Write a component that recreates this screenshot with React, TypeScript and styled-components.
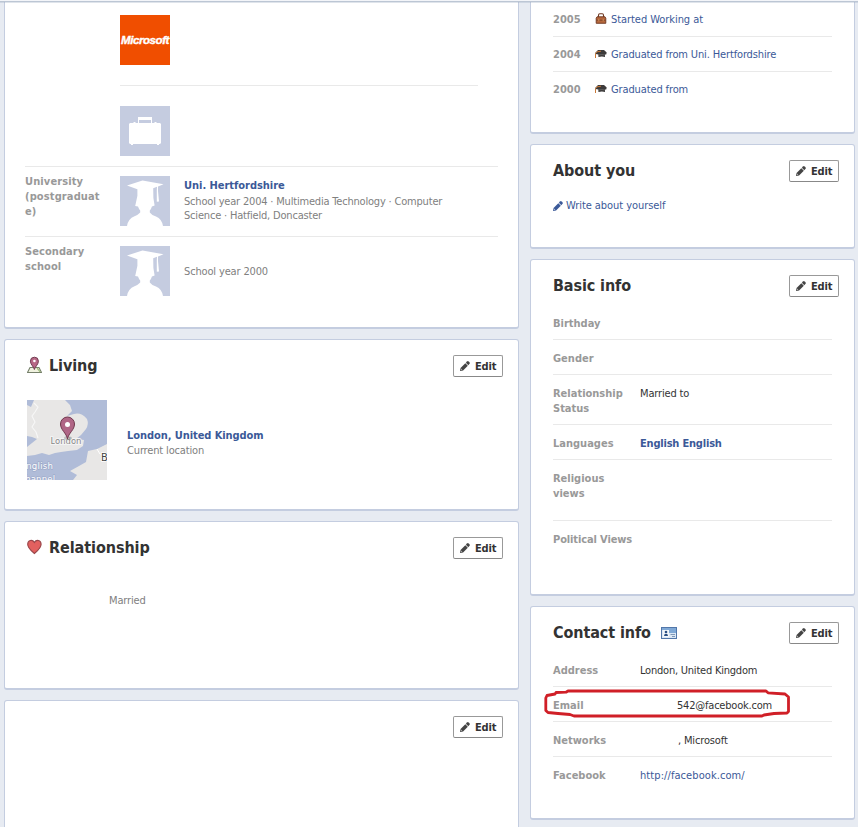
import React from 'react';
import styled, { createGlobalStyle, css } from 'styled-components';

const Global = createGlobalStyle`
  * { box-sizing: border-box; }
  html, body { margin: 0; height: 827px; overflow: hidden; }
  body {
    background: #e7ebf2;
    font: 11px/15px "DejaVu Sans Condensed", "DejaVu Sans", sans-serif;
    color: #333;
  }
`;

const Page = styled.div`
  width: 858px;
  height: 827px;
  overflow: hidden;
`;
const TopEdge = styled.div`
  height: 2px;
  background: #f3f5f9;
  border-bottom: 1px solid #bcc6d4;
  box-shadow: 0 1px 0 rgba(150, 165, 190, 0.3);
  position: relative;
`;
const Columns = styled.div`
  display: grid;
  grid-template-columns: 515px 325px;
  column-gap: 11px;
  padding-left: 4px;
  align-items: start;
`;
const Column = styled.div`
  display: flex;
  flex-direction: column;
  gap: 10px;
`;
const Card = styled.section<{ $h: number; $open?: boolean; $side?: boolean }>`
  height: ${p => p.$h}px;
  background: #fff;
  border: 1px solid #c4cde0;
  border-bottom-width: 2px;
  border-radius: 3px;
  padding: ${p => (p.$side ? '15px 15px 0 22px' : '15px 15px 0 20px')};
  ${p => p.$open && css`
    border-top: 0;
    border-radius: 0 0 3px 3px;
    padding-top: 0;
  `}
`;
const CardHead = styled.header`
  display: flex;
  align-items: center;
  height: 22px;
  gap: 5px;
`;
const Title = styled.h2<{ $ls?: number }>`
  margin: 0;
  font-size: 16px;
  line-height: 22px;
  font-weight: 700;
  color: #333;
  white-space: nowrap;
  letter-spacing: ${p => p.$ls ?? 0}px;
`;
const EditBox = styled.button`
  margin-left: auto;
  width: 50px;
  height: 22px;
  padding: 0 0 0 6px;
  display: flex;
  align-items: center;
  gap: 5px;
  border: 1px solid #999;
  border-bottom-color: #888;
  border-radius: 2px;
  background: #fff;
  font: 700 11px/15px "DejaVu Sans Condensed", sans-serif;
  letter-spacing: -0.15px;
  color: #333;
`;
const Strong = styled.div<{ $ls?: number }>`
  font-weight: 700;
  color: #3b5998;
  white-space: nowrap;
  letter-spacing: ${p => p.$ls ?? 0}px;
`;
const Muted = styled.div<{ $ls?: number; $lh?: number; $top?: number }>`
  margin-top: ${p => p.$top ?? 0}px;
  color: #808080;
  white-space: nowrap;
  line-height: ${p => p.$lh ?? 15}px;
  letter-spacing: ${p => p.$ls ?? -0.15}px;
`;
const Link = styled.span<{ $ls?: number }>`
  color: #3b5998;
  white-space: nowrap;
  letter-spacing: ${p => p.$ls ?? -0.12}px;
`;
const Label = styled.div<{ $ls?: number }>`
  font-weight: 700;
  color: #999;
  white-space: nowrap;
  letter-spacing: ${p => p.$ls ?? 0}px;
`;

const Employer = styled.div<{ $h: number; $top: number; $rule?: boolean }>`
  margin-left: 95px;
  width: 358px;
  height: ${p => p.$h}px;
  padding-top: ${p => p.$top}px;
  border-bottom: ${p => (p.$rule ? '1px solid #e9e9e9' : '0')};
`;
const School = styled.div`
  display: grid;
  grid-template-columns: 95px 50px 1fr;
  width: 473px;
  height: 70px;
  padding-top: 9px;
  border-top: 1px solid #e9e9e9;
`;
const SchoolLabel = styled(Label)`
  margin-top: -2px;
`;
const SchoolText = styled.div<{ $top: number }>`
  padding: ${p => p.$top}px 0 0 14px;
`;
const Tile = styled.svg`
  display: block;
  width: 50px;
  height: 50px;
  background: #c5cce0;
`;
const BrandTile = styled.div`
  width: 50px;
  height: 50px;
  display: flex;
  align-items: center;
  justify-content: center;
  background: #f04e00;
  color: #fff;
  font: italic 700 11.5px/50px "Liberation Sans", sans-serif;
  letter-spacing: -0.42px;
  -webkit-text-stroke: 0.4px #fff;
`;

const SectionIcon = styled.svg`
  display: block;
  margin: -3px 0 0 1px;
  width: 18px;
  height: 18px;
  flex: none;
`;
const PlaceRow = styled.div`
  display: flex;
  margin: 23px 0 0 2px;
  gap: 20px;
`;
const PlaceText = styled.div`
  padding-top: 28px;
`;
const MapTile = styled.svg`
  display: block;
  width: 80px;
  height: 80px;
`;
const RelationText = styled.div`
  margin: 34px 0 0 84px;
`;

const EventRow = styled.div<{ $last?: boolean }>`
  display: grid;
  grid-template-columns: 41px 17px 1fr;
  align-items: start;
  width: 279px;
  height: 35px;
  padding-top: 10px;
  border-bottom: ${p => (p.$last ? '0' : '1px solid #e9e9e9')};
`;
const SmallIcon = styled.svg`
  display: block;
  width: 13px;
  height: 12px;
  margin-top: 1px;
`;
const WriteLine = styled.div`
  display: flex;
  align-items: center;
  gap: 3px;
  margin-top: 16px;
`;
const InfoRows = styled.div`
  margin-top: 8px;
  width: 279px;
`;
const InfoRow = styled.div<{ $h: number; $last?: boolean }>`
  display: grid;
  grid-template-columns: 87px 1fr;
  height: ${p => p.$h}px;
  padding-top: 11px;
  border-bottom: ${p => (p.$last ? '0' : '1px solid #e9e9e9')};
`;
const Value = styled.div<{ $indent?: number; $ls?: number }>`
  padding-left: ${p => p.$indent ?? 0}px;
  color: #333;
  white-space: nowrap;
  letter-spacing: ${p => p.$ls ?? -0.15}px;
`;
const MarkedRow = styled(InfoRow)`
  position: relative;
`;
const Marker = styled.svg`
  position: absolute;
  left: -9px;
  top: 2px;
  width: 248px;
  height: 31px;
  pointer-events: none;
`;
const CardIcon = styled.svg`
  display: block;
  width: 16px;
  height: 12px;
  margin-left: 5px;
`;

const PencilSvg = styled.svg`
  display: block;
  width: 10px;
  height: 10px;
  flex: none;
`;
function Pencil({ color }: { color: string }) {
  return (
    <PencilSvg viewBox="0 0 10 10">
      <path d="M0 10L.6 6.9 5.3 2.2 7.8 4.7 3.1 9.4Z" fill={color} />
      <path d="M5.8 1.7L7.4.2Q8 -.1 8.6.4L9.6 1.4Q10.1 2 9.7 2.6L8.3 4.2Z" fill={color} />
      <path d="M1 7.6L2.4 9 1 9.1Z" fill="#fff" opacity=".65" />
    </PencilSvg>
  );
}
const Edit = () => <EditBox><Pencil color="#444" />Edit</EditBox>;

const Briefcase = () => (
  <Tile viewBox="0 0 50 50">
    <path d="M18 17V11H32V17H31V14H19V17Z" fill="#fff" />
    <path d="M10 17H13.5V16H15.5V17H34.5V16H36.5V17H40L41 18V37L40 38H39V39H37V38H13V39H11V38H10L9 37V18Z" fill="#fff" />
  </Tile>
);
const Graduate = () => (
  <Tile viewBox="0 0 50 50">
    <path d="M7 9.6L22.5 4.6 43.5 8.2 38 10.4V15L39 25.5 36.8 25.8V14L37 10.8 33.2 12.2 33.4 22 34.6 29.5 31.9 30.5Q31.4 32.6 29.8 34.4V36.6Q31.5 39.2 36 40.4 42 43 43 50H7Q8 43 14.5 40.3 18 39 20.2 36.6V34.4Q18.6 32.6 18 30.5L15.2 30 17.4 19.8V13.3Z" fill="#fff" />
  </Tile>
);
const Satchel = () => (
  <SmallIcon viewBox="0 0 13 12">
    <path d="M4.5 4V2.3Q4.5.8 5.8.8H8.2Q9.5.8 9.5 2.3V4" fill="none" stroke="#6d3720" strokeWidth="1.1" />
    <path d="M3 3.8H11L11.8 5.2V10.3H2.2V5.2Z" fill="#b5673c" stroke="#6d3720" strokeWidth=".9" />
    <path d="M2.5 7.2H11.5" stroke="#7c4126" strokeWidth=".9" />
    <path d="M4.8 6V8.2M9.2 6V8.2" stroke="#dba068" strokeWidth=".8" />
  </SmallIcon>
);
const Cap = () => (
  <SmallIcon viewBox="0 0 13 12">
    <path d="M1.3 4.8L4 2H10L12.7 4.4 12.2 6.4 11 6.6V9Q8 8 4.4 9V6.6L1.6 6Z" fill="#3d3b3b" />
    <path d="M4.6 7Q8 6 11 7" fill="none" stroke="#777" strokeWidth=".6" />
    <path d="M7 3.2L3 3.8 1.5 5.6V10" fill="none" stroke="#c97938" strokeWidth="1" />
  </SmallIcon>
);
const LivingIcon = () => (
  <SectionIcon viewBox="0 0 18 18">
    <path d="M4 11.5H13L15.5 16.5H1.5Z" fill="#f0f2df" stroke="#76806b" strokeWidth="1.1" strokeLinejoin="round" />
    <path d="M11 12L14.2 15.8" stroke="#a0bd7c" strokeWidth="1.2" />
    <path d="M8.4 13.5C8 10.8 4.4 8.6 4.4 5.2A4 4 0 0 1 12.4 5.2C12.4 8.6 8.8 10.8 8.4 13.5Z" fill="#b76886" stroke="#713b50" strokeWidth="1" />
    <circle cx="8.4" cy="5" r="1.3" fill="#fff" />
  </SectionIcon>
);
const HeartIcon = () => (
  <SectionIcon viewBox="0 0 18 18">
    <path d="M8.4 15.5C5.5 13 1.7 10 1.7 6.2 1.7 2 6.5 1.2 8.4 4.4 10.3 1.2 15.1 2 15.1 6.2 15.1 10 11.3 13 8.4 15.5Z" fill="#e2605f" stroke="#98474b" strokeWidth="1.1" />
  </SectionIcon>
);
const CardSvg = () => (
  <CardIcon viewBox="0 0 16 12">
    <rect x=".5" y=".5" width="15" height="11" fill="#dce8f5" stroke="#5277aa" />
    <rect x="1" y="1" width="14" height="2" fill="#80a9d6" />
    <rect x="8" y="2" width="7" height="4" fill="#80a9d6" />
    <rect x="2" y="3" width="6" height="7" fill="#f3f7fb" />
    <circle cx="5" cy="5" r="1.3" fill="#294e83" />
    <path d="M3 9Q3 6.8 5 6.8T7 9Z" fill="#294e83" />
    <path d="M9.5 7.5H14M11 9.5H14" stroke="#8098b7" />
  </CardIcon>
);

const mapFont = '"DejaVu Sans Condensed", sans-serif';
const LondonMap = () => (
  <MapTile viewBox="0 0 80 80">
    <rect width="80" height="80" fill="#b0bcd8" />
    <path d="M7 0H38L43 5 45 11 40 16 47 14Q54 12 60 19 62 24 59 29L54 35 49 39 57 40 56 46 50 50 41 51 34 52 28 53 22 55 15 53 8 55 0 56V47L5 43 10 39 5 37 0 36V5L4 7Z" fill="#e8e7e6" />
    <path d="M80 44L70 49 61 51 59 62 52 66 43 71 50 75 46 80H80Z" fill="#e8e7e6" />
    <path d="M7 3L11 7 8 12 5 16 8 22 5 27 9 32 11 38" fill="none" stroke="#f7f7f7" strokeWidth="1.1" />
    <path d="M70 49L73 54 78 55" fill="none" stroke="#fff" />
    <text x="23.5" y="43.5" fontFamily={mapFont} fontSize="9.5" fill="#888" stroke="#f4f4f4" strokeWidth="2" paintOrder="stroke" textLength="31">London</text>
    <ellipse cx="41" cy="38" rx="4" ry="2" fill="#777" opacity=".35" />
    <path d="M40.5 39C39.5 33 33.5 30 33.5 24A7 7 0 0 1 47.5 24C47.5 30 41.5 33 40.5 39Z" fill="#b06686" stroke="#71394e" strokeWidth="1" />
    <circle cx="40.5" cy="24.5" r="2.5" fill="#fff" />
    <text x="74" y="61" fontFamily={mapFont} fontSize="11" fill="#444" stroke="#fff" strokeWidth="1.5" paintOrder="stroke">B</text>
    <text x="-6.5" y="69" fontFamily={mapFont} fontSize="9.5" fill="#fff" stroke="#9ba8c8" strokeWidth="1.2" paintOrder="stroke" textLength="32.5">English</text>
    <text x="-8" y="81.5" fontFamily={mapFont} fontSize="9.5" fill="#fff" stroke="#9ba8c8" strokeWidth="1.2" paintOrder="stroke" textLength="36">Channel</text>
  </MapTile>
);

export default function App() {
  return (
    <>
      <Global />
      <Page>
        <TopEdge />
        <Columns>
          <Column>
            <Card $h={327} $open>
              <Employer $h={84} $top={13} $rule><BrandTile>Microsoft</BrandTile></Employer>
              <Employer $h={80} $top={20}><Briefcase /></Employer>
              <School>
                <SchoolLabel $ls={0.12}>University<br />(postgraduat<br />e)</SchoolLabel>
                <Graduate />
                <SchoolText $top={2}>
                  <Strong $ls={-0.03}>Uni. Hertfordshire</Strong>
                  <Muted $top={2} $lh={14} $ls={-0.19}>School year 2004 · Multimedia Technology · Computer<br />Science · Hatfield, Doncaster</Muted>
                </SchoolText>
              </School>
              <School>
                <SchoolLabel $ls={0.08}>Secondary<br />school</SchoolLabel>
                <Graduate />
                <SchoolText $top={18}><Muted>School year 2000</Muted></SchoolText>
              </School>
            </Card>
            <Card $h={172}>
              <CardHead><LivingIcon /><Title $ls={-0.1}>Living</Title><Edit /></CardHead>
              <PlaceRow>
                <LondonMap />
                <PlaceText>
                  <Strong $ls={-0.07}>London, United Kingdom</Strong>
                  <Muted>Current location</Muted>
                </PlaceText>
              </PlaceRow>
            </Card>
            <Card $h={169}>
              <CardHead><HeartIcon /><Title $ls={-0.07}>Relationship</Title><Edit /></CardHead>
              <RelationText><Muted>Married</Muted></RelationText>
            </Card>
            <Card $h={160}>
              <CardHead><Edit /></CardHead>
            </Card>
          </Column>
          <Column>
            <Card $h={132} $open $side>
              <EventRow><Label>2005</Label><Satchel /><Link $ls={-0.06}>Started Working at</Link></EventRow>
              <EventRow><Label>2004</Label><Cap /><Link $ls={-0.14}>Graduated from Uni. Hertfordshire</Link></EventRow>
              <EventRow $last><Label>2000</Label><Cap /><Link>Graduated from</Link></EventRow>
            </Card>
            <Card $h={105} $side>
              <CardHead><Title $ls={-0.1}>About you</Title><Edit /></CardHead>
              <WriteLine><Pencil color="#3b5998" /><Link $ls={-0.06}>Write about yourself</Link></WriteLine>
            </Card>
            <Card $h={337} $side>
              <CardHead><Title $ls={-0.1}>Basic info</Title><Edit /></CardHead>
              <InfoRows>
                <InfoRow $h={35}><Label>Birthday</Label></InfoRow>
                <InfoRow $h={35}><Label>Gender</Label></InfoRow>
                <InfoRow $h={50}><Label>Relationship<br />Status</Label><Value>Married to</Value></InfoRow>
                <InfoRow $h={35}><Label>Languages</Label><Strong $ls={-0.2}>English English</Strong></InfoRow>
                <InfoRow $h={61}><Label>Religious<br />views</Label></InfoRow>
                <InfoRow $h={35} $last><Label $ls={-0.12}>Political Views</Label></InfoRow>
              </InfoRows>
            </Card>
            <Card $h={214} $side>
              <CardHead><Title $ls={-0.1}>Contact info</Title><CardSvg /><Edit /></CardHead>
              <InfoRows>
                <InfoRow $h={35}><Label>Address</Label><Value $ls={-0.22}>London, United Kingdom</Value></InfoRow>
                <MarkedRow $h={35}>
                  <Label>Email</Label><Value $indent={37} $ls={-0.2}>542@facebook.com</Value>
                  <Marker viewBox="0 0 248 31">
                    <path d="M3 6.5L11 5 12 3.5 22 3.2 24 2H222L224 3.8 241 5 244.5 8V22.5L243 24 230 24.5 220 26 218 27H30L26 25.5 14 24.5 4 23.5 1.8 21.5V9Z" fill="none" stroke="#d01f27" strokeWidth="2.8" strokeLinejoin="round" />
                  </Marker>
                </MarkedRow>
                <InfoRow $h={35}><Label>Networks</Label><Value $indent={38}>, Microsoft</Value></InfoRow>
                <InfoRow $h={35} $last><Label>Facebook</Label><Link $ls={0.08}>http://facebook.com/</Link></InfoRow>
              </InfoRows>
            </Card>
          </Column>
        </Columns>
      </Page>
    </>
  );
}
